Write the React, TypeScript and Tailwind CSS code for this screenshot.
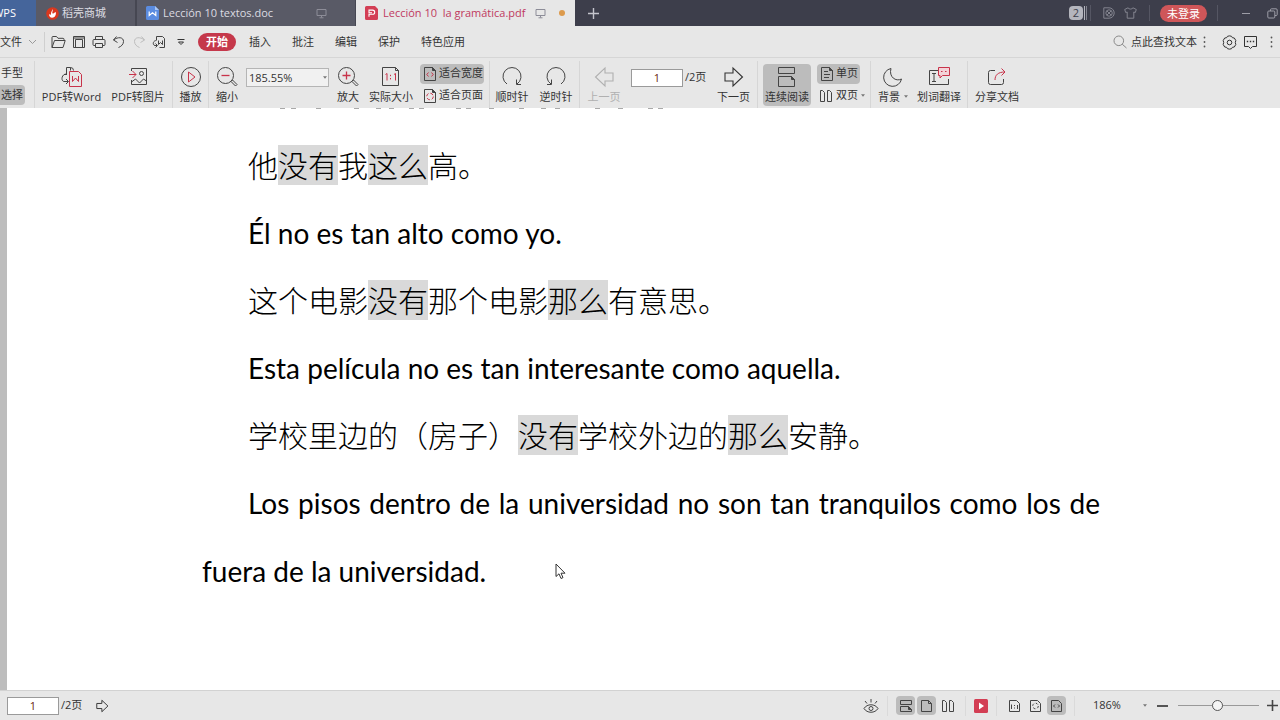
import type { ReactNode } from "react";

const RED = "#c8334a";

type IconProps = { w?: number; h?: number; children: ReactNode; className?: string };

function Icon({ w = 22, h = 22, children, className = "text-[#444]" }: IconProps) {
  return (
    <svg
      width={w}
      height={h}
      viewBox={`0 0 ${w} ${h}`}
      fill="none"
      stroke="currentColor"
      strokeWidth="1"
      className={`shrink-0 ${className}`}
      aria-hidden="true"
    >
      {children}
    </svg>
  );
}

function Sep() {
  return <div className="h-full w-px shrink-0 bg-[#d6d6d6]" />;
}

function Tool({ icon, label, className = "", caret = false, disabled = false }: { icon: ReactNode; label: string; className?: string; caret?: boolean; disabled?: boolean }) {
  return (
    <button
      disabled={disabled}
      className={`flex h-[42px] shrink-0 flex-col items-center justify-between whitespace-nowrap rounded pt-0.5 disabled:text-[#b0b0b0] ${className}`}
    >
      {icon}
      <span className="flex items-center gap-1 leading-[18px]">
        {label}
        {caret && <Caret />}
      </span>
    </button>
  );
}

function Caret() {
  return (
    <svg width="4" height="3" viewBox="0 0 5 3" className="shrink-0 fill-[#777]" aria-hidden="true">
      <path d="M0 0h5L2.5 3z" />
    </svg>
  );
}

function Monitor() {
  return (
    <Icon w={11} h={11} className="text-[#8d8d98]">
      <path d="M1 1.500h9v6H1zM5.500 7.500v2M3.500 9.800h4" />
    </Icon>
  );
}

function Dots() {
  return (
    <svg width="3" height="12" viewBox="0 0 3 12" className="shrink-0 fill-[#555]" aria-hidden="true">
      <circle cx="1.5" cy="1.5" r="0.9" />
      <circle cx="1.5" cy="6" r="0.9" />
      <circle cx="1.5" cy="10.5" r="0.9" />
    </svg>
  );
}

function BlockArrow({ left = false, small = false }: { left?: boolean; small?: boolean }) {
  return (
    <svg
      width={small ? 13 : 20}
      height={small ? 14 : 22}
      viewBox="0 0 20 22"
      fill="none"
      stroke="currentColor"
      strokeWidth={small ? 1.5 : 1.1}
      className={left ? "rotate-180" : ""}
      aria-hidden="true"
    >
      <path d="M1 7h8V2l9.500 9L9 20v-5H1z" />
    </svg>
  );
}

function TitleBar() {
  return (
    <header className="flex h-[26px] shrink-0 items-stretch overflow-hidden bg-[#3d3e4b] text-[#dcdce2]">
      <button className="flex w-9 shrink-0 items-center justify-end bg-[#45659b] pr-5 text-white">WPS</button>
      <button className="flex w-[101px] shrink-0 items-center gap-[3px] border-r-2 border-[#464752] bg-[#595a66] pl-2.5">
        <svg width="13" height="13" viewBox="0 0 13 13" aria-hidden="true">
          <circle cx="6.500" cy="6.500" r="6.300" fill="#d9381e" />
          <path d="M6.500 2c1 2-.8 3 0 4.500C7.500 7 8 5.500 9.800 5c.6 3-1 5.700-3.600 5.700C4 10.700 2.700 9 3.300 7c1 .6 1.300 1 1.700.4C4.600 5 6.400 4 6.500 2z" fill="#fff" />
        </svg>
        稻壳商城
      </button>
      <button className="flex w-[219px] shrink-0 items-center gap-1 border-r border-[#464752] bg-[#595a66] pl-[9px] pr-7">
        <svg width="13" height="14" viewBox="0 0 13 14" aria-hidden="true">
          <path d="M1.500 0H9l4 4v8.500a1.500 1.500 0 0 1-1.500 1.500h-10A1.500 1.500 0 0 1 0 12.500v-11A1.500 1.500 0 0 1 1.500 0z" fill="#5b8ce0" />
          <path d="M9 0l4 4H9z" fill="#a9c6f5" />
          <path d="M3.200 5.500v4l3.300-2.700 3.300 2.700v-4" fill="none" stroke="#fff" strokeWidth="1.200" />
        </svg>
        <span className="grow whitespace-nowrap text-left">Lección 10 textos.doc</span>
        <Monitor />
      </button>
      <button className="flex w-[219px] shrink-0 items-center gap-[5px] bg-[#e7e7e7] pl-[9px] pr-2.5 text-[#c0395f]">
        <svg width="13" height="14" viewBox="0 0 13 14" aria-hidden="true">
          <path d="M1.500 0H10l3 3v9.500a1.500 1.500 0 0 1-1.500 1.500h-10A1.500 1.500 0 0 1 0 12.500v-11A1.500 1.500 0 0 1 1.500 0z" fill="#d33e54" />
          <path d="M4 10.800V8.300h3.600a2.100 2.100 0 1 0 0-4.200H4v2.600h3" fill="none" stroke="#fff" strokeWidth="1.100" />
        </svg>
        <span className="grow whitespace-pre text-left">Lección 10  la gramática.pdf</span>
        <Monitor />
        <span className="ml-2 size-1.5 shrink-0 rounded-full bg-[#dc9a4c]" />
      </button>
      <button aria-label="+" className="flex w-9 shrink-0 items-center justify-center">
        <Icon w={11} h={11} className="text-[#c4c4cc]">
          <path d="M5.500 0v11M0 5.500h11" strokeWidth="1.400" />
        </Icon>
      </button>
      <div className="ml-auto flex shrink-0 items-center text-[#83848f]">
        <button className="flex h-3.5 items-stretch gap-px">
          <span className="flex w-3.5 items-center justify-center rounded-sm bg-[#b4b5bd] text-[#3d3e4b]">2</span>
          <span className="w-px bg-[#b4b5bd]" />
          <span className="w-px bg-[#83848f]" />
        </button>
        <span className="ml-[3px] h-4 w-px bg-[#555663]" />
        <Icon w={12} h={12} className="ml-3">
          <path d="M.8.8H6a5.200 5.200 0 0 1 0 10.400H.8zM6 2.800a3.200 3.200 0 1 0 .1 6.400A3.200 3.200 0 0 0 6 2.800M4 4l4 4M8 4L4 8" />
        </Icon>
        <Icon w={13} h={12} className="ml-[9px]">
          <path d="M4 .8C5 2.500 8 2.500 9 .8l3.300 1.700-1 3L9.800 5v6.200H3.200V5l-1.500.5-1-3z" />
        </Icon>
        <span className="ml-3 h-4 w-px bg-[#555663]" />
        <button className="ml-2.5 h-[17px] w-[47px] rounded-full bg-[#cf5659] leading-[17px] text-white">未登录</button>
        <span className="ml-2.5 h-4 w-px bg-[#555663]" />
        <span className="ml-6 h-px w-2 bg-[#9d9da7]" />
        <Icon w={11} h={11} className="ml-[17px] mr-0.5 text-[#9d9da7]">
          <rect x=".8" y="3" width="7" height="7" rx="1" />
          <path d="M3.500 3V1.800a1 1 0 0 1 1-1H9a1.200 1.200 0 0 1 1.200 1.200v4.500a1 1 0 0 1-1 1H8" />
        </Icon>
      </div>
    </header>
  );
}

function MenuBar() {
  return (
    <nav className="flex h-8 shrink-0 items-center overflow-hidden whitespace-nowrap border-b border-[#d6d6d6] pt-px">
      <button className="flex w-11 shrink-0 items-center gap-1.5">
        文件
        <Icon w={9} h={6} className="text-[#999]">
          <path d="M1 1l3.500 3.500L8 1" />
        </Icon>
      </button>
      <span className="h-5 w-px bg-[#cfcfcf]" />
      <div className="ml-1.5 flex items-center gap-[6px]">
        <Icon w={15} h={14}>
          <path d="M1 12.500V2.500a1 1 0 0 1 1-1h3.500L7 3.300h5a1 1 0 0 1 1 1v1.200M1 12.500L3.500 5.500h10.700L12 12.500z" />
        </Icon>
        <Icon w={14} h={14}>
          <path d="M1.500 12.500v-11h11v11zM3.500 4.500h7v8M3.500 4.500v8M1.500 3h11" />
        </Icon>
        <Icon w={14} h={14}>
          <path d="M3.500 4.500v-3h7v3M3.500 10.500H2a1 1 0 0 1-1-1V5.500a1 1 0 0 1 1-1h10a1 1 0 0 1 1 1v4a1 1 0 0 1-1 1h-1.500M3.500 8.500h7v4h-7z" />
        </Icon>
        <Icon w={14} h={14}>
          <path d="M4.500 1.500L1.500 5l4 2.500M1.500 5C6 1.500 11.500 2 11.500 6.500c0 3-2.500 5-5 6" />
        </Icon>
        <Icon w={14} h={14} className="text-[#bdbdbd]">
          <path d="M9.500 1.500l3 3.500-4 2.500M12.500 5C8 1.500 2.500 2 2.500 6.500c0 3 2.500 5 5 6" />
        </Icon>
        <Icon w={14} h={14}>
          <path d="M4.500 5V1.500h6l2 2v9H7.500M4.500 5.500C.5 5.500.5 10.500 3 10.500h2M3.500 8.500l2 2-2 2M6.500 5.500v4L8.500 7.500l2 2v-4" />
        </Icon>
        <Icon w={10} h={8} className="ml-1">
          <path d="M1.500 1.500h7M2.500 4l2.500 2.500L7.500 4z" />
        </Icon>
      </div>
      <button className="ml-3 h-[18px] w-[38px] shrink-0 rounded-full bg-[#c5384b] font-bold leading-[18px] text-white">开始</button>
      <div className="ml-[13px] flex gap-[21px]">
        {["插入", "批注", "编辑", "保护", "特色应用"].map((m) => (
          <button key={m}>{m}</button>
        ))}
      </div>
      <div className="ml-auto flex items-center pr-1.5">
        <Icon w={14} h={14} className="text-[#8a8a8a]">
          <path d="M5.800 1a4.800 4.800 0 1 1 0 9.600 4.800 4.800 0 0 1 0-9.600M9.200 9.200L13.500 13" />
        </Icon>
        <button className="ml-1 mr-1.5">点此查找文本</button>
        <Dots />
        <Icon w={15} h={15} className="ml-4">
          <path d="M5.500 1.300Q7.500.4 9.500 1.300L10.400 2.700 12.300 3 13.800 5.500 13.300 7.500 13.800 9.500 12.300 12 10.400 12.300 9.500 13.700Q7.500 14.600 5.500 13.700L4.600 12.300 2.700 12 1.200 9.500 1.700 7.500 1.200 5.500 2.700 3 4.600 2.700z" />
          <circle cx="7.500" cy="7.500" r="2.300" />
        </Icon>
        <Icon w={15} h={15} className="ml-1.5">
          <path d="M1.500 1.500h12v10H9.500L7.500 13.500l-2-2h-4z" />
          <path d="M3.800 6.500h1.400M6.800 6.500h1.400M9.800 6.500h1.400" strokeWidth="1.500" />
        </Icon>
        <span className="ml-3 mr-px">
          <Dots />
        </span>
      </div>
    </nav>
  );
}

function SmallPage({ children }: { children?: ReactNode }) {
  return (
    <Icon w={14} h={16}>
      <path d="M1.500 1.500h8l3 3v10h-11z" />
      <path d="M9.500 1.500v3h3z" fill="currentColor" />
      {children}
    </Icon>
  );
}

function Ribbon() {
  return (
    <div className="flex h-[50px] shrink-0 items-center overflow-hidden whitespace-nowrap pt-[3px]">
      <div className="flex w-[34px] shrink-0 flex-col items-start gap-[3px]">
        <button className="h-[18px] pl-px leading-[18px]">手型</button>
        <button className="h-5 w-[25px] rounded-r bg-[#bcbcbc] pl-px text-left leading-5">选择</button>
      </div>
      <Sep />
      <Tool
        className="w-[73px]"
        label="PDF转Word"
        icon={
          <Icon>
            <path d="M5.500 8V1.500h4q3 0 3 3M9.500 1.500v3M5.500 8C0 8 0 15.500 3 15.500h4M5 13l2.500 2.500L5 18M3 8.500h3" />
            <path d="M8.500 5.500h9l3 3v12h-12zM11.500 10v5.500l3-3.500 3 3.500V10" stroke={RED} />
          </Icon>
        }
      />
      <Tool
        className="w-[60px]"
        label="PDF转图片"
        icon={
          <Icon>
            <path d="M4.500 5V2.500h15v16h-15V14M4.500 16l4-3 4 4 4-4 3 2" />
            <circle cx="14.500" cy="7.500" r="2" />
            <path d="M2 8.500h7M5.500 5L9 8.500 5.500 12" stroke={RED} />
          </Icon>
        }
      />
      <span className="w-1" />
      <Sep />
      <Tool
        className="w-[35px]"
        label="播放"
        icon={
          <Icon>
            <circle cx="11" cy="11" r="9.500" />
            <path d="M8.500 6l6.500 5-6.500 5z" stroke={RED} />
          </Icon>
        }
      />
      <Sep />
      <Tool
        className="w-9"
        label="缩小"
        icon={
          <Icon>
            <circle cx="9.500" cy="9.500" r="8" />
            <path d="M15 15.500l1.500-1.500 4.500 4.500-1.500 1.500z" />
            <path d="M5.500 9.500h8" stroke={RED} strokeWidth="1.300" />
          </Icon>
        }
      />
      <div className="relative mb-3.5 ml-px h-[19px] w-[83px] shrink-0">
        <select aria-label="缩放" className="block h-full w-full appearance-none border border-[#b5b5b5] bg-[#f1f1f1] pl-0.5 leading-[17px]">
          <option>185.55%</option>
        </select>
        <span className="pointer-events-none absolute right-0.5 top-2">
          <Caret />
        </span>
      </div>
      <Tool
        className="w-[38px]"
        label="放大"
        icon={
          <Icon>
            <circle cx="9.500" cy="9.500" r="8" />
            <path d="M15 15.500l1.500-1.500 4.500 4.500-1.500 1.500z" />
            <path d="M5.500 9.500h8M9.500 5.500v8" stroke={RED} strokeWidth="1.300" />
          </Icon>
        }
      />
      <Tool
        className="w-12"
        label="实际大小"
        icon={
          <Icon>
            <path d="M2.500 1.500h13l3 3v15h-16zM15.500 1.500v3h3" />
            <path d="M5.500 8.500l1.500-1v7M14 8.500l1.500-1v7M10.500 8.800v1.400M10.500 12v1.400" stroke={RED} />
          </Icon>
        }
      />
      <div className="ml-[5px] mr-[5px] flex w-16 shrink-0 flex-col gap-0.5">
        <button className="flex h-5 items-center gap-0.5 rounded bg-[#bcbcbc] pl-[3px]">
          <SmallPage>
            <path d="M5.500 6.500L3.800 8.500l1.700 2M8.500 6.500l1.700 2-1.700 2" stroke={RED} />
          </SmallPage>
          适合宽度
        </button>
        <button className="flex h-5 items-center gap-0.5 rounded pl-[3px]">
          <SmallPage>
            <circle cx="7" cy="8.500" r="3.300" stroke={RED} strokeDasharray="3.200 2" />
          </SmallPage>
          适合页面
        </button>
      </div>
      <Sep />
      <Tool
        className="w-11"
        label="顺时针"
        icon={
          <Icon>
            <path d="M6 18A9 9 0 1 1 16 18M20 18.500h-4.500v-5" />
          </Icon>
        }
      />
      <Tool
        className="w-11"
        label="逆时针"
        icon={
          <Icon>
            <path d="M16 18A9 9 0 1 0 6 18M2 18.500h4.500v-5" />
          </Icon>
        }
      />
      <span className="w-px" />
      <Sep />
      <Tool className="w-12" disabled label="上一页" icon={<BlockArrow left />} />
      <label className="mb-3.5 ml-[3px] flex w-[79px] shrink-0 items-center gap-0.5">
        <input aria-label="页码" defaultValue="1" className="h-[18px] w-[52px] border border-[#9a9a9a] bg-white text-center text-[#6b2410]" />
        /2页
      </label>
      <Tool className="w-[47px]" label="下一页" icon={<BlockArrow />} />
      <Sep />
      <Tool
        className="ml-[5px] w-12 bg-[#bcbcbc]"
        label="连续阅读"
        icon={
          <Icon>
            <path d="M2.500 1.500v6h16v-6zM18.500 20.500h-16v-10h13l3 3v7z" />
            <path d="M15.500 10.500v3h3z" fill="currentColor" />
          </Icon>
        }
      />
      <div className="ml-1.5 flex w-[53px] shrink-0 flex-col items-start gap-0.5">
        <button className="flex h-5 w-[43px] items-center gap-0.5 rounded bg-[#bcbcbc] pl-[3px]">
          <SmallPage>
            <path d="M4 5.500h4M4 8.500h6M4 11.500h5" />
          </SmallPage>
          单页
        </button>
        <button className="flex h-5 items-center gap-[3px] pl-0.5">
          <Icon w={14} h={14}>
            <path d="M1.500 1.500h2l2 2v9h-4zM8.500 1.500h2l2 2v9h-4z" />
          </Icon>
          双页
          <Caret />
        </button>
      </div>
      <Sep />
      <Tool
        className="w-11"
        label="背景"
        caret
        icon={
          <Icon>
            <path d="M9 2.500A9 9 0 1 0 19.500 13C14 16 6.500 11 9 2.500z" />
          </Icon>
        }
      />
      <Tool
        className="w-12"
        label="划词翻译"
        icon={
          <Icon>
            <path d="M10 4.500H1.500v14h19V13M4 7.500h4M6 7.500v8M4 15.500h4" />
            <path d="M10.500 1.500h11v8h-7L12 12v-2.500h-1.500z" stroke={RED} fill="#f3d3d8" />
            <path d="M13 5.500h1.500M17 5.500h1.500" stroke={RED} />
          </Icon>
        }
      />
      <span className="w-1" />
      <Sep />
      <Tool
        className="w-[58px]"
        label="分享文档"
        icon={
          <Icon>
            <path d="M9 4.500H4.500a2 2 0 0 0-2 2v10a2 2 0 0 0 2 2h11a2 2 0 0 0 2-2V13" />
            <path d="M9 14c0-5 3-8 10-8M15.500 2.500l3.500 3.500-3.500 3.500" stroke={RED} />
          </Icon>
        }
      />
    </div>
  );
}

function Mark({ children }: { children: ReactNode }) {
  return <mark className="inline-block bg-[#d9d9d9] indent-0 leading-[40px] text-black">{children}</mark>;
}

const zh = "indent-[46px] text-[30px] leading-[67px] font-light";
const es = "indent-[46px] text-[28px] leading-[68px]";

const previousLineFeet = [36, 47, 72, 110, 132, 145, 165, 175, 212, 222, 245, 275, 297, 311, 351, 374, 404, 414];

function Page() {
  return (
    <main className="relative min-h-0 grow overflow-hidden border-l-[7px] border-[#bdbdbd] bg-white">
      <svg width="450" height="2" viewBox="0 0 450 2" className="ml-[239px] block" aria-hidden="true">
        {previousLineFeet.map((x) => (
          <path key={x} d={`M${x - 2} 0h5`} stroke="#555" strokeWidth="1" />
        ))}
      </svg>
      <article className="ml-[195px] mt-[22px] max-w-[898px] font-['Lato','Noto_Sans_CJK_SC',sans-serif] text-black">
        <p className={zh}>
          他<Mark>没有</Mark>我<Mark>这么</Mark>高。
        </p>
        <p className={es}>Él no es tan alto como yo.</p>
        <p className={zh}>
          这个电影<Mark>没有</Mark>那个电影<Mark>那么</Mark>有意思。
        </p>
        <p className={es}>Esta película no es tan interesante como aquella.</p>
        <p className={zh}>
          学校里边的（房子）<Mark>没有</Mark>学校外边的<Mark>那么</Mark>安静。
        </p>
        <p className={`${es} text-justify`}>
          Los pisos dentro de la universidad no son tan tranquilos como los de fuera de la universidad.
        </p>
      </article>
      <svg width="12" height="18" viewBox="0 0 12 18" className="absolute left-[548px] top-[455px]" aria-hidden="true">
        <path d="M1 1v12.500l3-2.700 2 4.700 2-.9-2-4.400h4z" fill="#fff" stroke="#333" />
      </svg>
    </main>
  );
}

function StatusToggle({ children, on = false, label }: { children: ReactNode; on?: boolean; label: string }) {
  return (
    <button aria-label={label} className={`flex h-[19px] w-[19px] shrink-0 items-center justify-center rounded ${on ? "bg-[#bcbcbc]" : ""}`}>
      {children}
    </button>
  );
}

function StatusBar() {
  return (
    <footer className="flex h-[30px] shrink-0 items-center overflow-hidden border-t border-[#d2d2d2] pl-[7px] pr-0.5">
      <label className="flex items-center gap-0.5">
        <input aria-label="页码" defaultValue="1" className="h-[18px] w-[52px] border border-[#9a9a9a] bg-white text-center text-[#6b2410]" />
        /2页
      </label>
      <button aria-label="下一页" className="ml-3.5">
        <BlockArrow small />
      </button>
      <div className="ml-auto flex items-center">
        <Icon w={16} h={16}>
          <path d="M1 10.500c3-5 11-5 14 0-3 5-11 5-14 0zM2 3l2 2.500M8 1v3.500M14 3l-2 2.500" />
          <circle cx="8" cy="10.500" r="2" />
        </Icon>
        <span className="mx-2 h-5 w-px bg-[#dadada]" />
        <div className="flex gap-0.5">
          <StatusToggle on label="连续阅读">
            <Icon w={14} h={14}>
              <path d="M1.500 1.500v4h11v-4zM12.500 12.500h-11v-5h8l3 3z" />
              <path d="M9.500 7.500v3h3z" fill="currentColor" />
            </Icon>
          </StatusToggle>
          <StatusToggle on label="单页">
            <Icon w={13} h={14}>
              <path d="M1.500 1.500h7l3 3v8h-10zM8.500 1.500v3h3" />
            </Icon>
          </StatusToggle>
          <StatusToggle label="双页">
            <Icon w={14} h={14}>
              <path d="M1.500 1.500h2l2 2v9h-4zM8.500 1.500h2l2 2v9h-4z" />
            </Icon>
          </StatusToggle>
        </div>
        <span className="mx-2 h-5 w-px bg-[#dadada]" />
        <button aria-label="播放">
          <svg width="14" height="14" viewBox="0 0 14 14" className="block">
            <rect width="14" height="14" rx="1.500" fill="#d33e54" />
            <path d="M5 3.500L10 7l-5 3.500z" fill="#fff" />
          </svg>
        </button>
        <span className="mx-2 h-5 w-px bg-[#dadada]" />
        <div className="flex gap-0.5">
          <StatusToggle label="实际大小">
            <Icon w={13} h={14}>
              <path d="M1.500 1.500h7l3 3v8h-10zM3.500 5.500v4.500M9.500 6v4M6.500 6v1M6.500 8.500v1" />
            </Icon>
          </StatusToggle>
          <StatusToggle label="适合页面">
            <Icon w={13} h={14}>
              <path d="M1.500 1.500h7l3 3v8h-10z" />
              <circle cx="6.500" cy="7" r="2.800" strokeDasharray="2.400 2" />
            </Icon>
          </StatusToggle>
          <StatusToggle on label="适合宽度">
            <Icon w={13} h={14}>
              <path d="M1.500 1.500h7l3 3v8h-10zM5 5.500L3.500 7 5 8.500M8 5.500L9.500 7 8 8.500" />
            </Icon>
          </StatusToggle>
        </div>
        <span className="ml-2 h-5 w-px bg-[#dadada]" />
        <button className="ml-[18px] flex w-[54px] items-center justify-between">
          186%
          <Caret />
        </button>
        <button aria-label="缩小" className="ml-2.5 h-3 w-[11px]">
          <span className="block h-0.5 bg-[#555]" />
        </button>
        <input
          type="range"
          aria-label="缩放比例"
          defaultValue="49"
          className="ml-2.5 h-3 w-[81px] appearance-none bg-transparent [&::-webkit-slider-runnable-track]:h-px [&::-webkit-slider-runnable-track]:bg-[#999] [&::-webkit-slider-thumb]:-mt-[5px] [&::-webkit-slider-thumb]:size-[11px] [&::-webkit-slider-thumb]:appearance-none [&::-webkit-slider-thumb]:rounded-full [&::-webkit-slider-thumb]:border [&::-webkit-slider-thumb]:border-[#555] [&::-webkit-slider-thumb]:bg-[#f4f4f4]"
        />
        <button aria-label="放大" className="ml-2">
          <Icon w={11} h={11}>
            <path d="M5.500 0v11M0 5.500h11" strokeWidth="1.600" />
          </Icon>
        </button>
      </div>
    </footer>
  );
}

export default function App() {
  return (
    <div className="flex h-screen flex-col overflow-hidden bg-[#e7e7e7] font-['Open_Sans','Noto_Sans_CJK_SC',sans-serif] text-[11px] text-[#333]">
      <TitleBar />
      <MenuBar />
      <Ribbon />
      <Page />
      <StatusBar />
    </div>
  );
}
